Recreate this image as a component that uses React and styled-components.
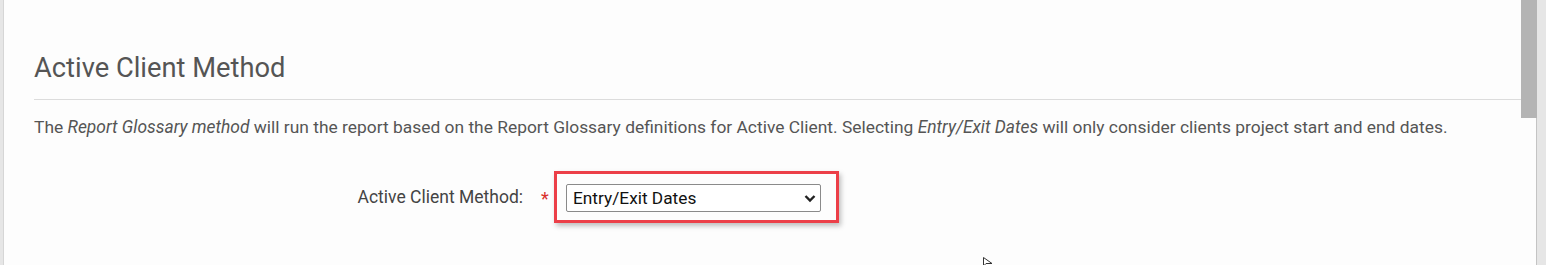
import React from "react";
import styled, { createGlobalStyle } from "styled-components";

const Global = createGlobalStyle`
  html, body { margin: 0; padding: 0; background: #e6e6e6; }
  body { font-family: Roboto, "Liberation Sans", Arial, sans-serif; }
  #root { width: 1546px; height: 265px; overflow: hidden; }
`;

const Page = styled.div`
  display: flex;
  width: 1546px;
  height: 265px;
  background: #e6e6e6;
  position: relative;
`;

const Panel = styled.div`
  display: flex;
  margin-left: 3px;
  width: 1532px;
  height: 265px;
  background: #fdfdfd;
  border-left: 1px solid #d6d6d6;
  border-right: 1px solid #c4c4c4;
`;

const Content = styled.div`
  flex: 1;
  padding: 0 0 0 30px;
`;

const Heading = styled.h2`
  margin: 0;
  padding-top: 52px;
  height: 47px;
  font-size: 27.3px;
  font-weight: 400;
  color: #555;
  line-height: 32px;
  border-bottom: 1px solid #dcdcdc;
`;

const Description = styled.p`
  margin: 15px 0 0;
  font-size: 17.4px;
  line-height: 24px;
  color: #555;
  em { font-style: italic; }
`;

const FormRow = styled.div`
  display: flex;
  align-items: center;
  margin-top: 32px;
  padding-left: 311px;
`;

const Label = styled.label`
  font-size: 17.5px;
  color: #444;
  width: 178px;
  text-align: right;
`;

const Required = styled.span`
  color: #d9302c;
  font-size: 18px;
  margin-left: 18px;
  width: 13px;
  position: relative;
  top: 1px;
`;

const Highlight = styled.div`
  display: flex;
  padding: 10px 15px 8px 9px;
  border: 3px solid #ec3f48;
  box-shadow: 2px 3px 5px rgba(0, 0, 0, 0.25);
`;

const SelectWrap = styled.div`
  position: relative;
  width: 255px;
  height: 28px;
`;

const Select = styled.select`
  appearance: none;
  -webkit-appearance: none;
  width: 100%;
  height: 100%;
  box-sizing: border-box;
  border: 1px solid #8a8a8a;
  border-radius: 2px;
  background: #fff;
  padding: 0 0 0 6px;
  font-family: Roboto, "Liberation Sans", Arial, sans-serif;
  font-size: 17.3px;
  color: #111;
  outline: none;
`;

const Chevron = styled.svg`
  position: absolute;
  right: 5px;
  top: 10px;
  pointer-events: none;
`;

const ScrollTrack = styled.div`
  width: 15px;
  background: #fdfdfd;
`;

const Thumb = styled.div`
  height: 118px;
  width: 16px;
  background: #b4b4b4;
`;

const Cursor = styled.svg`
  position: absolute;
  left: 983px;
  top: 257px;
`;

export default function App() {
  return (
    <>
      <Global />
      <Page>
        <Panel>
          <Content>
            <Heading>Active Client Method</Heading>
            <Description>
              The <em>Report Glossary method</em> will run the report based on the Report
              Glossary definitions for Active Client. Selecting <em>Entry/Exit Dates</em> will
              only consider clients project start and end dates.
            </Description>
            <FormRow>
              <Label>Active Client Method:</Label>
              <Required>*</Required>
              <Highlight>
                <SelectWrap>
                  <Select defaultValue="entry">
                    <option value="glossary">Report Glossary</option>
                    <option value="entry">Entry/Exit Dates</option>
                  </Select>
                  <Chevron width="12" height="9" viewBox="0 0 12 9">
                    <path d="M1.5 2 L6 6.5 L10.5 2" fill="none" stroke="#222" strokeWidth="2.4" />
                  </Chevron>
                </SelectWrap>
              </Highlight>
            </FormRow>
          </Content>
          <ScrollTrack>
            <Thumb />
          </ScrollTrack>
        </Panel>
        <Cursor width="10" height="10" viewBox="0 0 10 10">
          <path d="M0.5 0.5 L0.5 9 L3 6.5 L9 6.5 Z" fill="#fff" stroke="#333" strokeWidth="1" />
        </Cursor>
      </Page>
    </>
  );
}
